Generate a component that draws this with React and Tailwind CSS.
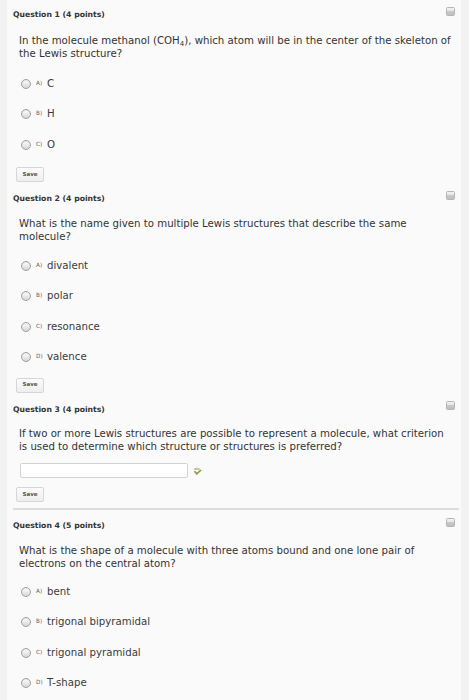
import React from 'react';

const font = { fontFamily: '"DejaVu Sans", Verdana, sans-serif' };

const Flag = () => (
  <svg width="9" height="9" viewBox="0 0 9 9" className="block">
    <defs>
      <linearGradient id="fg" x1="0" y1="0" x2="0" y2="1">
        <stop offset="0" stopColor="#f4f4f4" />
        <stop offset="0.5" stopColor="#e2e2e2" />
        <stop offset="0.5" stopColor="#c9c9c9" />
        <stop offset="1" stopColor="#bdbdbd" />
      </linearGradient>
    </defs>
    <rect x="0.5" y="0.5" width="8" height="8" rx="1" fill="url(#fg)" stroke="#b5b5b5" />
  </svg>
);

const Radio = () => (
  <span className="inline-block w-[10px] h-[10px] rounded-full border border-[#a0a0a0] bg-gradient-to-b from-[#ffffff] to-[#d6d6d6] shadow-[inset_0_1px_1px_rgba(0,0,0,0.08)]" />
);

const Header = ({ n, pts }) => (
  <div className="flex items-center justify-between pl-[6px] pr-[6px] h-[12px] leading-[12px]">
    <span className="text-[7.7px] font-bold text-[#333]">
      Question {n} ({pts} points)
    </span>
    <span className="-mt-[8px]">
      <Flag />
    </span>
  </div>
);

const Option = ({ letter, text }) => (
  <div className="flex items-center h-[30.5px] pl-[14px]">
    <Radio />
    <span className="ml-[5px] text-[5.7px] text-[#666] w-[10px] leading-none">{letter})</span>
    <span className="ml-[1px] text-[10.2px] text-[#3a3a3a] leading-none">{text}</span>
  </div>
);

const SaveBtn = ({ className = '' }) => (
  <div className={'flex pl-[9px] ' + className}>
    <button className="h-[15px] w-[28px] rounded-[2px] border border-[#d6d6d6] bg-gradient-to-b from-[#fbfbfb] to-[#eeeeee] text-[5.5px] font-bold text-[#555] leading-none">
      Save
    </button>
  </div>
);

const QText = ({ children, className = '' }) => (
  <p className={'pl-[12px] pr-[8px] text-[10.2px] leading-[13px] text-[#333] ' + className}>{children}</p>
);

export default function App() {
  return (
    <div className="min-h-[700px] w-[469px] bg-[#f2f2f2] overflow-hidden" style={font}>
      <div className="ml-[7px] mr-[8px] bg-[#fafafa] min-h-[700px] pt-[9px]">
        {/* Question 1 */}
        <Header n={1} pts={4} />
        <QText className="mt-[12.5px]">
          In the molecule methanol (COH<span className="relative top-[2px] text-[7px] leading-none">4</span>), which atom will be in the center of the skeleton of the Lewis structure?
        </QText>
        <div className="mt-[9px]">
          <Option letter="A" text="C" />
          <Option letter="B" text="H" />
          <Option letter="C" text="O" />
        </div>
        <SaveBtn className="mt-[7px]" />

        {/* Question 2 */}
        <div className="mt-[11px]">
          <Header n={2} pts={4} />
        </div>
        <QText className="mt-[11.5px]">
          What is the name given to multiple Lewis structures that describe the same molecule?
        </QText>
        <div className="mt-[8px]">
          <Option letter="A" text="divalent" />
          <Option letter="B" text="polar" />
          <Option letter="C" text="resonance" />
          <Option letter="D" text="valence" />
        </div>
        <SaveBtn className="mt-[5px]" />

        {/* Question 3 */}
        <div className="mt-[11px]">
          <Header n={3} pts={4} />
        </div>
        <QText className="mt-[11.5px]">
          If two or more Lewis structures are possible to represent a molecule, what criterion is used to determine which structure or structures is preferred?
        </QText>
        <div className="flex items-center mt-[10px] pl-[13px]">
          <input className="h-[15px] w-[168px] rounded-[2px] border border-[#d3d3d3] bg-white outline-none" />
          <svg width="9" height="9" viewBox="0 0 9 9" className="ml-[5px] -mt-[1px]">
            <text x="1" y="3.5" fontSize="3.5" fill="#777" fontFamily="DejaVu Sans">abc</text>
            <path d="M1.5 5.2 L3.8 7.8 L8 4" stroke="#7aa32a" strokeWidth="1.6" fill="none" />
          </svg>
        </div>
        <SaveBtn className="mt-[9px]" />

        <div className="mt-[6px] ml-[6px] mr-[2px] h-[2px] bg-[#dcdcdc]" />

        {/* Question 4 */}
        <div className="mt-[10px]">
          <Header n={4} pts={5} />
        </div>
        <QText className="mt-[11.5px]">
          What is the shape of a molecule with three atoms bound and one lone pair of electrons on the central atom?
        </QText>
        <div className="mt-[7px]">
          <Option letter="A" text="bent" />
          <Option letter="B" text="trigonal bipyramidal" />
          <Option letter="C" text="trigonal pyramidal" />
          <Option letter="D" text="T-shape" />
        </div>
      </div>
    </div>
  );
}
